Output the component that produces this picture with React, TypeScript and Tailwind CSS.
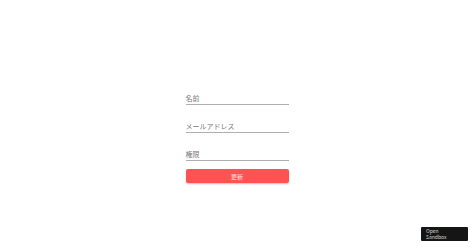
import React from "react";

const font = { fontFamily: '"Noto Sans CJK JP", "Noto Sans", sans-serif' };

function Field({ label }: { label: string }) {
  return (
    <div className="flex h-[28px] flex-col justify-end">
      <div className="h-[9px] text-[7px] leading-[9px] text-[#7a7a7a]">{label}</div>
      <div className="mt-[1px] h-px w-full bg-[#b0b0b0]" />
    </div>
  );
}

export default function App() {
  return (
    <div className="relative h-[248px] w-[474px] bg-white" style={font}>
      <div className="flex justify-center pt-[77px]">
        <div className="flex w-[103px] flex-col">
          <Field label="名前" />
          <Field label="メールアドレス" />
          <Field label="権限" />
          <button className="mt-[8px] flex h-[14px] w-full items-center justify-center rounded-[2px] bg-[#ff5252] text-[6px] text-[#ffe5e5] shadow-[0_1px_2px_rgba(0,0,0,0.25)]">
            更新
          </button>
        </div>
      </div>
      <div className="absolute bottom-[7px] right-[6px] flex h-[14px] w-[47px] flex-col justify-center rounded-[1px] bg-[#151515] px-[5px] text-[5px] leading-[6.5px] text-[#d8d8d8]">
        <span>Open</span>
        <span>Sandbox</span>
      </div>
    </div>
  );
}
